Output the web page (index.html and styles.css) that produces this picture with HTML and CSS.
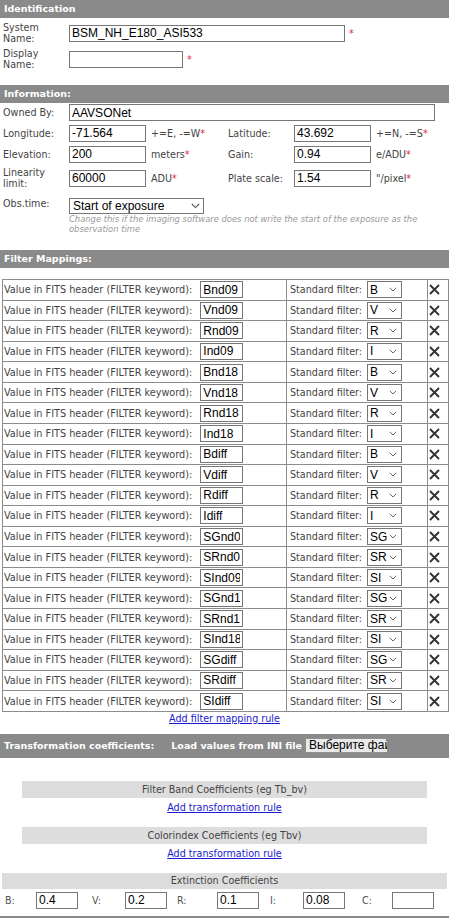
FILE: index.html
```html
<!DOCTYPE html>
<html>
<head>
<meta charset="utf-8">
<title>Telescope settings</title>
<link rel="stylesheet" href="styles.css">
</head>
<body>
<div class="page">
  <div class="hdr">Identification</div>
  <div class="ident">
    <label class="lbl">System Name:</label>
    <div class="fld"><input class="txt w-sys" value="BSM_NH_E180_ASI533"><span class="req">*</span></div>
    <label class="lbl">Display Name:</label>
    <div class="fld"><input class="txt w-disp" value=""><span class="req">*</span></div>
  </div>

  <div class="hdr">Information:</div>
  <div class="info">
    <label class="lbl">Owned By:</label>
    <div class="wide"><input class="txt w-own" value="AAVSONet"></div>

    <label class="lbl">Longitude:</label>
    <div><input class="txt w-num" value="-71.564"></div>
    <span class="unit">+=E, -=W<span class="req2">*</span></span>
    <label class="lbl">Latitude:</label>
    <div><input class="txt w-num" value="43.692"></div>
    <span class="unit">+=N, -=S<span class="req2">*</span></span>

    <label class="lbl">Elevation:</label>
    <div><input class="txt w-num" value="200"></div>
    <span class="unit">meters<span class="req2">*</span></span>
    <label class="lbl">Gain:</label>
    <div><input class="txt w-num" value="0.94"></div>
    <span class="unit">e/ADU<span class="req2">*</span></span>

    <label class="lbl">Linearity limit:</label>
    <div><input class="txt w-num" value="60000"></div>
    <span class="unit">ADU<span class="req2">*</span></span>
    <label class="lbl">Plate scale:</label>
    <div><input class="txt w-num" value="1.54"></div>
    <span class="unit">"/pixel<span class="req2">*</span></span>

    <label class="lbl top">Obs.time:</label>
    <div class="wide top">
      <span class="sel sel-obs"><select><option>Start of exposure</option><option>Middle of exposure</option><option>End of exposure</option></select><svg class="chev" width="9" height="6" viewBox="0 0 9 6"><path d="M0.8 1 L4.5 4.6 L8.2 1" fill="none" stroke="#555" stroke-width="1.1"/></svg></span>
    </div>
    <div class="note">Change this if the imaging software does not write the start of the exposure as the observation time</div>
  </div>

  <div class="hdr">Filter Mappings:</div>
  <table class="fm">
    <colgroup><col class="c1"><col class="c2"><col class="c3"></colgroup>
    <tbody>
      <tr><td class="kw">Value in FITS header (FILTER keyword):<input class="txt kwi" value="Bnd09"></td><td class="sf">Standard filter:<span class="sel sel-f"><select><option>B</option></select><svg class="chev" width="8" height="5" viewBox="0 0 8 5"><path d="M0.8 0.8 L4 4 L7.2 0.8" fill="none" stroke="#666" stroke-width="1"/></svg></span></td><td class="del"><svg width="11" height="11" viewBox="0 0 11 11"><path d="M1 1 L10 10 M10 1 L1 10" stroke="#333" stroke-width="1.9"/></svg></td></tr>
      <tr><td class="kw">Value in FITS header (FILTER keyword):<input class="txt kwi" value="Vnd09"></td><td class="sf">Standard filter:<span class="sel sel-f"><select><option>V</option></select><svg class="chev" width="8" height="5" viewBox="0 0 8 5"><path d="M0.8 0.8 L4 4 L7.2 0.8" fill="none" stroke="#666" stroke-width="1"/></svg></span></td><td class="del"><svg width="11" height="11" viewBox="0 0 11 11"><path d="M1 1 L10 10 M10 1 L1 10" stroke="#333" stroke-width="1.9"/></svg></td></tr>
      <tr><td class="kw">Value in FITS header (FILTER keyword):<input class="txt kwi" value="Rnd09"></td><td class="sf">Standard filter:<span class="sel sel-f"><select><option>R</option></select><svg class="chev" width="8" height="5" viewBox="0 0 8 5"><path d="M0.8 0.8 L4 4 L7.2 0.8" fill="none" stroke="#666" stroke-width="1"/></svg></span></td><td class="del"><svg width="11" height="11" viewBox="0 0 11 11"><path d="M1 1 L10 10 M10 1 L1 10" stroke="#333" stroke-width="1.9"/></svg></td></tr>
      <tr><td class="kw">Value in FITS header (FILTER keyword):<input class="txt kwi" value="Ind09"></td><td class="sf">Standard filter:<span class="sel sel-f"><select><option>I</option></select><svg class="chev" width="8" height="5" viewBox="0 0 8 5"><path d="M0.8 0.8 L4 4 L7.2 0.8" fill="none" stroke="#666" stroke-width="1"/></svg></span></td><td class="del"><svg width="11" height="11" viewBox="0 0 11 11"><path d="M1 1 L10 10 M10 1 L1 10" stroke="#333" stroke-width="1.9"/></svg></td></tr>
      <tr><td class="kw">Value in FITS header (FILTER keyword):<input class="txt kwi" value="Bnd18"></td><td class="sf">Standard filter:<span class="sel sel-f"><select><option>B</option></select><svg class="chev" width="8" height="5" viewBox="0 0 8 5"><path d="M0.8 0.8 L4 4 L7.2 0.8" fill="none" stroke="#666" stroke-width="1"/></svg></span></td><td class="del"><svg width="11" height="11" viewBox="0 0 11 11"><path d="M1 1 L10 10 M10 1 L1 10" stroke="#333" stroke-width="1.9"/></svg></td></tr>
      <tr><td class="kw">Value in FITS header (FILTER keyword):<input class="txt kwi" value="Vnd18"></td><td class="sf">Standard filter:<span class="sel sel-f"><select><option>V</option></select><svg class="chev" width="8" height="5" viewBox="0 0 8 5"><path d="M0.8 0.8 L4 4 L7.2 0.8" fill="none" stroke="#666" stroke-width="1"/></svg></span></td><td class="del"><svg width="11" height="11" viewBox="0 0 11 11"><path d="M1 1 L10 10 M10 1 L1 10" stroke="#333" stroke-width="1.9"/></svg></td></tr>
      <tr><td class="kw">Value in FITS header (FILTER keyword):<input class="txt kwi" value="Rnd18"></td><td class="sf">Standard filter:<span class="sel sel-f"><select><option>R</option></select><svg class="chev" width="8" height="5" viewBox="0 0 8 5"><path d="M0.8 0.8 L4 4 L7.2 0.8" fill="none" stroke="#666" stroke-width="1"/></svg></span></td><td class="del"><svg width="11" height="11" viewBox="0 0 11 11"><path d="M1 1 L10 10 M10 1 L1 10" stroke="#333" stroke-width="1.9"/></svg></td></tr>
      <tr><td class="kw">Value in FITS header (FILTER keyword):<input class="txt kwi" value="Ind18"></td><td class="sf">Standard filter:<span class="sel sel-f"><select><option>I</option></select><svg class="chev" width="8" height="5" viewBox="0 0 8 5"><path d="M0.8 0.8 L4 4 L7.2 0.8" fill="none" stroke="#666" stroke-width="1"/></svg></span></td><td class="del"><svg width="11" height="11" viewBox="0 0 11 11"><path d="M1 1 L10 10 M10 1 L1 10" stroke="#333" stroke-width="1.9"/></svg></td></tr>
      <tr><td class="kw">Value in FITS header (FILTER keyword):<input class="txt kwi" value="Bdiff"></td><td class="sf">Standard filter:<span class="sel sel-f"><select><option>B</option></select><svg class="chev" width="8" height="5" viewBox="0 0 8 5"><path d="M0.8 0.8 L4 4 L7.2 0.8" fill="none" stroke="#666" stroke-width="1"/></svg></span></td><td class="del"><svg width="11" height="11" viewBox="0 0 11 11"><path d="M1 1 L10 10 M10 1 L1 10" stroke="#333" stroke-width="1.9"/></svg></td></tr>
      <tr><td class="kw">Value in FITS header (FILTER keyword):<input class="txt kwi" value="Vdiff"></td><td class="sf">Standard filter:<span class="sel sel-f"><select><option>V</option></select><svg class="chev" width="8" height="5" viewBox="0 0 8 5"><path d="M0.8 0.8 L4 4 L7.2 0.8" fill="none" stroke="#666" stroke-width="1"/></svg></span></td><td class="del"><svg width="11" height="11" viewBox="0 0 11 11"><path d="M1 1 L10 10 M10 1 L1 10" stroke="#333" stroke-width="1.9"/></svg></td></tr>
      <tr><td class="kw">Value in FITS header (FILTER keyword):<input class="txt kwi" value="Rdiff"></td><td class="sf">Standard filter:<span class="sel sel-f"><select><option>R</option></select><svg class="chev" width="8" height="5" viewBox="0 0 8 5"><path d="M0.8 0.8 L4 4 L7.2 0.8" fill="none" stroke="#666" stroke-width="1"/></svg></span></td><td class="del"><svg width="11" height="11" viewBox="0 0 11 11"><path d="M1 1 L10 10 M10 1 L1 10" stroke="#333" stroke-width="1.9"/></svg></td></tr>
      <tr><td class="kw">Value in FITS header (FILTER keyword):<input class="txt kwi" value="Idiff"></td><td class="sf">Standard filter:<span class="sel sel-f"><select><option>I</option></select><svg class="chev" width="8" height="5" viewBox="0 0 8 5"><path d="M0.8 0.8 L4 4 L7.2 0.8" fill="none" stroke="#666" stroke-width="1"/></svg></span></td><td class="del"><svg width="11" height="11" viewBox="0 0 11 11"><path d="M1 1 L10 10 M10 1 L1 10" stroke="#333" stroke-width="1.9"/></svg></td></tr>
      <tr><td class="kw">Value in FITS header (FILTER keyword):<input class="txt kwi" value="SGnd09"></td><td class="sf">Standard filter:<span class="sel sel-f"><select><option>SG</option></select><svg class="chev" width="8" height="5" viewBox="0 0 8 5"><path d="M0.8 0.8 L4 4 L7.2 0.8" fill="none" stroke="#666" stroke-width="1"/></svg></span></td><td class="del"><svg width="11" height="11" viewBox="0 0 11 11"><path d="M1 1 L10 10 M10 1 L1 10" stroke="#333" stroke-width="1.9"/></svg></td></tr>
      <tr><td class="kw">Value in FITS header (FILTER keyword):<input class="txt kwi" value="SRnd09"></td><td class="sf">Standard filter:<span class="sel sel-f"><select><option>SR</option></select><svg class="chev" width="8" height="5" viewBox="0 0 8 5"><path d="M0.8 0.8 L4 4 L7.2 0.8" fill="none" stroke="#666" stroke-width="1"/></svg></span></td><td class="del"><svg width="11" height="11" viewBox="0 0 11 11"><path d="M1 1 L10 10 M10 1 L1 10" stroke="#333" stroke-width="1.9"/></svg></td></tr>
      <tr><td class="kw">Value in FITS header (FILTER keyword):<input class="txt kwi" value="SInd09"></td><td class="sf">Standard filter:<span class="sel sel-f"><select><option>SI</option></select><svg class="chev" width="8" height="5" viewBox="0 0 8 5"><path d="M0.8 0.8 L4 4 L7.2 0.8" fill="none" stroke="#666" stroke-width="1"/></svg></span></td><td class="del"><svg width="11" height="11" viewBox="0 0 11 11"><path d="M1 1 L10 10 M10 1 L1 10" stroke="#333" stroke-width="1.9"/></svg></td></tr>
      <tr><td class="kw">Value in FITS header (FILTER keyword):<input class="txt kwi" value="SGnd18"></td><td class="sf">Standard filter:<span class="sel sel-f"><select><option>SG</option></select><svg class="chev" width="8" height="5" viewBox="0 0 8 5"><path d="M0.8 0.8 L4 4 L7.2 0.8" fill="none" stroke="#666" stroke-width="1"/></svg></span></td><td class="del"><svg width="11" height="11" viewBox="0 0 11 11"><path d="M1 1 L10 10 M10 1 L1 10" stroke="#333" stroke-width="1.9"/></svg></td></tr>
      <tr><td class="kw">Value in FITS header (FILTER keyword):<input class="txt kwi" value="SRnd18"></td><td class="sf">Standard filter:<span class="sel sel-f"><select><option>SR</option></select><svg class="chev" width="8" height="5" viewBox="0 0 8 5"><path d="M0.8 0.8 L4 4 L7.2 0.8" fill="none" stroke="#666" stroke-width="1"/></svg></span></td><td class="del"><svg width="11" height="11" viewBox="0 0 11 11"><path d="M1 1 L10 10 M10 1 L1 10" stroke="#333" stroke-width="1.9"/></svg></td></tr>
      <tr><td class="kw">Value in FITS header (FILTER keyword):<input class="txt kwi" value="SInd18"></td><td class="sf">Standard filter:<span class="sel sel-f"><select><option>SI</option></select><svg class="chev" width="8" height="5" viewBox="0 0 8 5"><path d="M0.8 0.8 L4 4 L7.2 0.8" fill="none" stroke="#666" stroke-width="1"/></svg></span></td><td class="del"><svg width="11" height="11" viewBox="0 0 11 11"><path d="M1 1 L10 10 M10 1 L1 10" stroke="#333" stroke-width="1.9"/></svg></td></tr>
      <tr><td class="kw">Value in FITS header (FILTER keyword):<input class="txt kwi" value="SGdiff"></td><td class="sf">Standard filter:<span class="sel sel-f"><select><option>SG</option></select><svg class="chev" width="8" height="5" viewBox="0 0 8 5"><path d="M0.8 0.8 L4 4 L7.2 0.8" fill="none" stroke="#666" stroke-width="1"/></svg></span></td><td class="del"><svg width="11" height="11" viewBox="0 0 11 11"><path d="M1 1 L10 10 M10 1 L1 10" stroke="#333" stroke-width="1.9"/></svg></td></tr>
      <tr><td class="kw">Value in FITS header (FILTER keyword):<input class="txt kwi" value="SRdiff"></td><td class="sf">Standard filter:<span class="sel sel-f"><select><option>SR</option></select><svg class="chev" width="8" height="5" viewBox="0 0 8 5"><path d="M0.8 0.8 L4 4 L7.2 0.8" fill="none" stroke="#666" stroke-width="1"/></svg></span></td><td class="del"><svg width="11" height="11" viewBox="0 0 11 11"><path d="M1 1 L10 10 M10 1 L1 10" stroke="#333" stroke-width="1.9"/></svg></td></tr>
      <tr><td class="kw">Value in FITS header (FILTER keyword):<input class="txt kwi" value="SIdiff"></td><td class="sf">Standard filter:<span class="sel sel-f"><select><option>SI</option></select><svg class="chev" width="8" height="5" viewBox="0 0 8 5"><path d="M0.8 0.8 L4 4 L7.2 0.8" fill="none" stroke="#666" stroke-width="1"/></svg></span></td><td class="del"><svg width="11" height="11" viewBox="0 0 11 11"><path d="M1 1 L10 10 M10 1 L1 10" stroke="#333" stroke-width="1.9"/></svg></td></tr>
    </tbody>
  </table>
  <div class="addrow"><a href="#">Add filter mapping rule</a></div>

  <div class="hdr tbar">
    <span>Transformation coefficients:</span>
    <span class="load">Load values from INI file</span>
    <span class="file"><button type="button">Выберите файл</button></span>
  </div>

  <div class="cbar cbar-first">Filter Band Coefficients (eg Tb_bv)</div>
  <div class="addrow2"><a href="#">Add transformation rule</a></div>
  <div class="cbar">Colorindex Coefficients (eg Tbv)</div>
  <div class="addrow2 last"><a href="#">Add transformation rule</a></div>

  <div class="ext">
    <div class="ext-hdr">Extinction Coefficients</div>
    <div class="ext-row">
      <span class="el">B:</span><span><input class="txt ei" value="0.4"></span>
      <span class="el">V:</span><span><input class="txt ei" value="0.2"></span>
      <span class="el">R:</span><span><input class="txt ei" value="0.1"></span>
      <span class="el">I:</span><span><input class="txt ei" value="0.08"></span>
      <span class="el">C:</span><span><input class="txt ei" value=""></span>
    </div>
  </div>
  <div class="hdr next">&nbsp;</div>
</div>
</body>
</html>
```

FILE: styles.css
```css
* { box-sizing: border-box; }
body {
  margin: 0;
  background: #fff;
  font-family: "DejaVu Sans", Verdana, sans-serif;
  font-size: 9.6px;
  color: #444;
}
.page { width: 449px; }

.hdr {
  height: 18px;
  line-height: 18px;
  background: #8a8a8a;
  color: #fff;
  font-weight: bold;
  font-size: 9.5px;
  padding-left: 4px;
  white-space: nowrap;
  overflow: hidden;
}

.txt {
  height: 17px;
  border: 1px solid #767676;
  border-radius: 0;
  padding: 0 2px;
  margin: 0;
  font-family: "Liberation Sans", Arial, sans-serif;
  font-size: 12px;
  color: #000;
  background: #fff;
  vertical-align: middle;
}

.req { color: #e0284a; margin-left: 4px; }
.req2 { color: #e0284a; }

.lbl { padding-left: 3px; line-height: 11px; }

/* Identification */
.ident {
  display: grid;
  grid-template-columns: 69px 1fr;
  grid-auto-rows: 26px;
  align-items: center;
  padding-top: 2px;
  margin-bottom: 13px;
}
.fld { display: flex; align-items: center; }
.w-sys { width: 276px; }
.w-disp { width: 114px; }

/* Information */
.info {
  display: grid;
  grid-template-columns: 69px 81px 75px 69px 81px 1fr;
  grid-template-rows: 19px 22px 20px 28px auto auto;
  align-items: center;
  margin-bottom: 16px;
}
.wide { grid-column: 2 / -1; }
.w-own { width: 366px; }
.w-num { width: 77px; }
.unit { padding-left: 1px; white-space: nowrap; }
.top { align-self: start; margin-top: 6px; }
.note {
  grid-column: 2 / -1;
  font-size: 8.4px;
  line-height: 10px;
  font-style: italic;
  color: #999;
  padding-right: 4px;
}

.sel { position: relative; display: inline-block; vertical-align: middle; }
.sel select {
  appearance: none;
  -webkit-appearance: none;
  display: block;
  height: 17px;
  border: 1px solid #767676;
  border-radius: 0;
  background: #fff;
  font-family: "Liberation Sans", Arial, sans-serif;
  font-size: 12px;
  color: #000;
  padding: 0 0 0 2px;
  margin: 0;
  outline: none;
}
.sel .chev { position: absolute; top: 6px; right: 5px; pointer-events: none; }
.sel-obs select { width: 135px; height: 16px; padding-left: 3px; line-height: 14px; }
.sel-obs .chev { top: 5px; right: 4px; }
.sel-f { margin-left: 5px; }
.sel-f select { width: 35px; }

/* Filter mappings */
.fm {
  border-collapse: collapse;
  table-layout: fixed;
  width: 446px;
  margin: 11px 0 0 2px;
}
.fm .c1 { width: 284px; }
.fm .c2 { width: 141px; }
.fm .c3 { width: 21px; }
.fm td {
  border: 1px solid #8c8c8c;
  height: 20.57px;
  padding: 0 0 0 1px;
  white-space: nowrap;
  overflow: hidden;
  vertical-align: middle;
}
.fm td.kw { font-size: 9.7px; }
.fm td.sf { padding-left: 3px; }
.fm td.del { padding-left: 1px; }
.fm td.del svg { display: block; }
.kwi { width: 43px; margin-left: 8px; }

.addrow {
  text-align: center;
  line-height: 12px;
  margin-top: 1px;
  margin-bottom: 9px;
}
a { color: #1a1ad0; text-decoration: underline; }

/* Transformation bar */
.tbar {
  height: 24px;
  display: flex;
  align-items: center;
  line-height: 12px;
}
.load { margin-left: 17px; }
.file {
  display: inline-block;
  width: 82px;
  height: 15px;
  overflow: hidden;
  margin-left: 3px;
}
.file button {
  height: 15px;
  border: 1px solid #8f8f8f;
  background: #e9e9e9;
  color: #000;
  font-family: "Liberation Sans", Arial, sans-serif;
  font-size: 12px;
  line-height: 13px;
  padding: 0 3px;
  white-space: nowrap;
  font-weight: normal;
}

.cbar {
  width: 90%;
  margin: 0 auto;
  height: 17px;
  line-height: 17px;
  background: #ddd;
  text-align: center;
  color: #444;
}
.cbar-first { margin-top: 23px; }
.addrow2 {
  text-align: center;
  line-height: 12px;
  margin: 4px 0 13px;
}
.addrow2.last { margin-bottom: 11px; }

.ext { padding: 2px; }
.ext-hdr {
  height: 16px;
  line-height: 16px;
  background: #ddd;
  text-align: center;
  color: #444;
  margin-bottom: 2px;
}
.ext-row {
  display: grid;
  grid-template-columns: 33px 54px 35px 50px 42px 51px 35px 57px 32px 1fr;
  height: 19px;
  align-items: center;
}
.el { padding-left: 3px; color: #555; }
.ei { width: 42px; margin-left: 1px; }
.next { margin-top: 4px; }
```
